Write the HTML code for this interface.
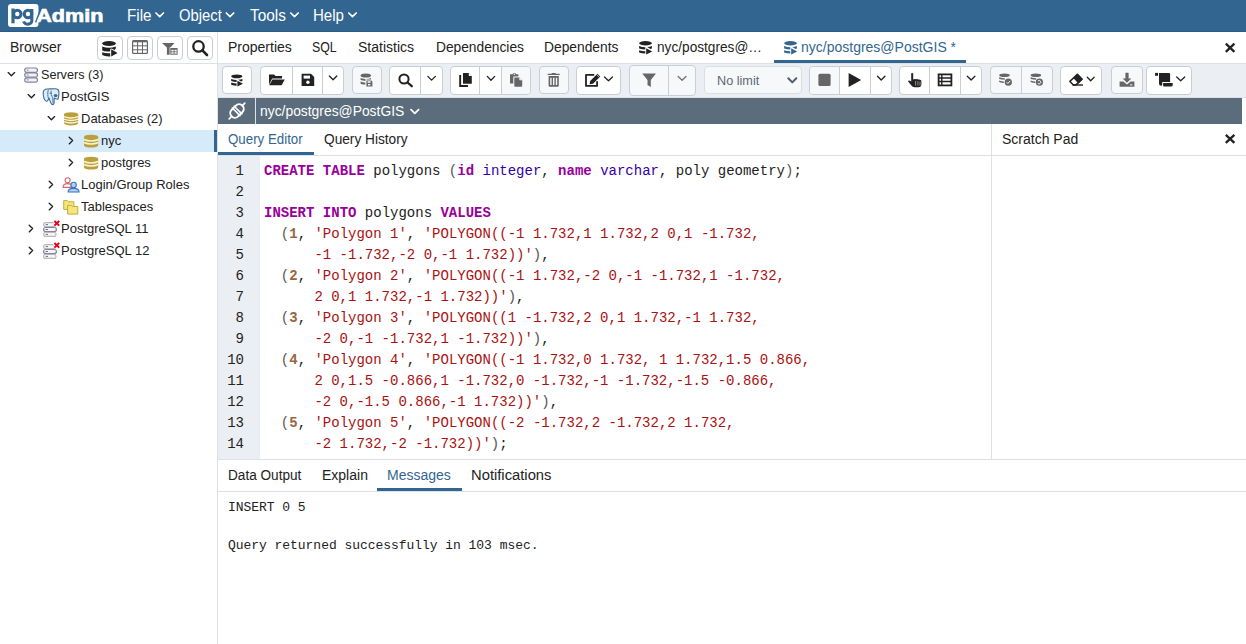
<!DOCTYPE html>
<html><head><meta charset="utf-8">
<style>
*{box-sizing:border-box;margin:0;padding:0}
html,body{width:1246px;height:644px;overflow:hidden;background:#fff;font-family:"Liberation Sans",sans-serif;color:#222}
.a{position:absolute}
.t{position:absolute;white-space:nowrap;line-height:1}
.m{font-family:"Liberation Mono",monospace}
svg{position:absolute;display:block}
/* header */
#hdr{left:0;top:0;width:1246px;height:32px;background:#326690;border-bottom:1px solid #2b5b84}
.menu{color:#fff;font-size:16px;transform-origin:0 0}
/* left */
#vdiv{left:217px;top:32px;width:1px;height:612px;background:#dde0e6}
.bbtn{position:absolute;top:36px;width:26px;height:24px;border:1px solid #c9ced6;border-radius:4px;background:#fff}
.tree{font-size:13px}
/* right */
.tab{font-size:14px}
.hl{background:#dde0e6}
#tb{left:218px;top:64px;width:1028px;height:34px;background:#ebeef3;border-bottom:1px solid #dde0e6}
.btn{position:absolute;top:66px;height:28px;border:1px solid #c9ced6;border-radius:4px;background:#fff}
.dis{background:#f7f8fa}
.sep{position:absolute;top:0;bottom:0;width:1px;background:#c9ced6}
#conn{left:218px;top:98px;width:1024px;height:26px;background:#5b6d7c}
.code{font-size:14px;line-height:21px}
.kw{color:#990099;font-weight:bold}
.st{color:#aa1111}
.nu{color:#996644;font-weight:bold}
.bi{color:#3300aa}
.br{color:#555}
</style></head><body>

<!-- HEADER -->
<div id="hdr" class="a"></div>
<div class="t menu" style="left:127.3px;top:7.5px;transform:scaleX(0.95)">File</div>
<div class="t menu" style="left:179px;top:7.5px;transform:scaleX(0.925)">Object</div>
<div class="t menu" style="left:250px;top:7.5px;transform:scaleX(0.96)">Tools</div>
<div class="t menu" style="left:313px;top:7.5px;transform:scaleX(0.94)">Help</div>

<!-- LEFT PANEL -->
<div id="vdiv" class="a"></div>
<div class="t" style="left:10px;top:40px;font-size:14px">Browser</div>
<div class="bbtn" style="left:97px"></div>
<div class="bbtn" style="left:127px"></div>
<div class="bbtn" style="left:157px"></div>
<div class="bbtn" style="left:187px"></div>
<div class="a hl" style="left:0;top:63px;width:217px;height:1px"></div>

<!-- tree -->
<div class="a" style="left:0;top:130px;width:217px;height:22px;background:#d6ebf9"></div>
<div class="a" style="left:214px;top:130px;width:3px;height:22px;background:#326690"></div>
<div class="t tree" style="left:41px;top:68px;transform:scaleX(0.97);transform-origin:0 0">Servers (3)</div>
<div class="t tree" style="left:61px;top:90px">PostGIS</div>
<div class="t tree" style="left:81px;top:112px">Databases (2)</div>
<div class="t tree" style="left:101px;top:134px">nyc</div>
<div class="t tree" style="left:101px;top:156px">postgres</div>
<div class="t tree" style="left:81px;top:178px">Login/Group Roles</div>
<div class="t tree" style="left:81px;top:200px">Tablespaces</div>
<div class="t tree" style="left:61px;top:222px">PostgreSQL 11</div>
<div class="t tree" style="left:61px;top:244px">PostgreSQL 12</div>

<!-- RIGHT: tabs -->
<div class="a hl" style="left:218px;top:63px;width:1028px;height:1px"></div>
<div class="t tab" style="left:228px;top:40px">Properties</div>
<div class="t tab" style="transform:scaleX(0.88);transform-origin:0 0;left:312px;top:40px">SQL</div>
<div class="t tab" style="left:358px;top:40px">Statistics</div>
<div class="t tab" style="transform:scaleX(0.982);transform-origin:0 0;left:436px;top:40px">Dependencies</div>
<div class="t tab" style="transform:scaleX(0.985);transform-origin:0 0;left:544px;top:40px">Dependents</div>
<div class="t tab" style="left:657px;top:40px;transform:scaleX(0.975);transform-origin:0 0">nyc/postgres@…</div>
<div class="t tab" style="left:801px;top:40px;color:#326690">nyc/postgres@PostGIS *</div>
<div class="a" style="left:774px;top:60px;width:192px;height:3px;background:#326690"></div>

<!-- toolbar -->
<div id="tb" class="a"></div>
<div class="btn" style="left:222px;width:30px"></div>
<div class="btn" style="height:29px;left:260px;width:84px"><div class="sep" style="left:31px"></div><div class="sep" style="left:61px"></div></div>
<div class="btn dis" style="left:352px;width:30px"></div>
<div class="btn" style="height:29px;left:389px;width:54px"><div class="sep" style="left:30px"></div></div>
<div class="btn" style="height:29px;left:450px;width:81px"><div class="a" style="left:50px;top:0;right:0;bottom:0;background:#f7f8fa;border-radius:0 3px 3px 0"></div><div class="sep" style="left:28px"></div><div class="sep" style="left:50px"></div></div>
<div class="btn dis" style="left:539px;width:30px"></div>
<div class="btn" style="height:29px;left:576px;width:45px"></div>
<div class="btn dis" style="left:629px;width:67px;top:65px;height:31px"><div class="sep" style="left:38px"></div></div>
<div class="btn dis" style="left:704px;width:98px;border-color:#dadde3"></div>
<div class="btn" style="height:29px;left:809px;width:83px"><div class="a" style="left:0;top:0;width:29px;bottom:0;background:#f7f8fa;border-radius:3px 0 0 3px"></div><div class="sep" style="left:29px"></div><div class="sep" style="left:60px"></div></div>
<div class="btn" style="height:29px;left:899px;width:83px"><div class="sep" style="left:29px"></div><div class="sep" style="left:60px"></div></div>
<div class="btn dis" style="left:990px;width:63px"><div class="sep" style="left:30px"></div></div>
<div class="btn" style="height:29px;left:1060px;width:42px"></div>
<div class="btn dis" style="left:1111px;width:32px"></div>
<div class="btn" style="height:29px;left:1146px;width:46px"></div>
<div class="t" style="left:716.5px;top:74px;font-size:13px;color:#5b6877;transform:scaleX(0.975);transform-origin:0 0">No limit</div>

<!-- connection bar -->
<div id="conn" class="a"><div class="a" style="left:37px;top:0;width:1px;height:26px;background:#dfe3e8"></div></div>
<div class="t" style="left:259.6px;top:104px;font-size:14px;color:#fff;transform:scaleX(0.99);transform-origin:0 0">nyc/postgres@PostGIS</div>

<!-- query editor tabs -->
<div class="t tab" style="transform:scaleX(0.95);transform-origin:0 0;left:228px;top:132px;color:#326690">Query Editor</div>
<div class="t tab" style="transform:scaleX(0.977);transform-origin:0 0;left:324px;top:132px">Query History</div>
<div class="a" style="left:218px;top:152px;width:96px;height:3px;background:#326690"></div>
<div class="a hl" style="left:218px;top:155px;width:1028px;height:1px"></div>
<div class="a hl" style="left:991px;top:124px;width:1px;height:335px"></div>
<div class="t tab" style="left:1002px;top:132px">Scratch Pad</div>

<!-- editor -->
<div class="a" style="left:218px;top:156px;width:42px;height:303px;background:#ebeef3"></div>
<pre class="a m code" style="left:218px;top:161px;width:26px;text-align:right;color:#222">1
2
3
4
5
6
7
8
9
10
11
12
13
14</pre>
<pre class="a m code" style="left:264px;top:161px;color:#222"><span class="kw">CREATE</span> <span class="kw">TABLE</span> polygons <span class="br">(</span><span class="kw">id</span> <span class="bi">integer</span>, <span class="kw">name</span> <span class="bi">varchar</span>, poly geometry<span class="br">)</span>;

<span class="kw">INSERT</span> <span class="kw">INTO</span> polygons <span class="kw">VALUES</span>
  <span class="br">(</span><span class="nu">1</span>, <span class="st">'Polygon 1'</span>, <span class="st">'POLYGON((-1 1.732,1 1.732,2 0,1 -1.732,</span>
<span class="st">      -1 -1.732,-2 0,-1 1.732))'</span><span class="br">)</span>,
  <span class="br">(</span><span class="nu">2</span>, <span class="st">'Polygon 2'</span>, <span class="st">'POLYGON((-1 1.732,-2 0,-1 -1.732,1 -1.732,</span>
<span class="st">      2 0,1 1.732,-1 1.732))'</span><span class="br">)</span>,
  <span class="br">(</span><span class="nu">3</span>, <span class="st">'Polygon 3'</span>, <span class="st">'POLYGON((1 -1.732,2 0,1 1.732,-1 1.732,</span>
<span class="st">      -2 0,-1 -1.732,1 -1.732))'</span><span class="br">)</span>,
  <span class="br">(</span><span class="nu">4</span>, <span class="st">'Polygon 4'</span>, <span class="st">'POLYGON((-1 1.732,0 1.732, 1 1.732,1.5 0.866,</span>
<span class="st">      2 0,1.5 -0.866,1 -1.732,0 -1.732,-1 -1.732,-1.5 -0.866,</span>
<span class="st">      -2 0,-1.5 0.866,-1 1.732))'</span><span class="br">)</span>,
  <span class="br">(</span><span class="nu">5</span>, <span class="st">'Polygon 5'</span>, <span class="st">'POLYGON((-2 -1.732,2 -1.732,2 1.732,</span>
<span class="st">      -2 1.732,-2 -1.732))'</span><span class="br">)</span>;</pre>
<div class="a hl" style="left:218px;top:459px;width:1028px;height:1px"></div>

<!-- output tabs -->
<div class="t tab" style="transform:scaleX(0.972);transform-origin:0 0;left:228px;top:468px">Data Output</div>
<div class="t tab" style="left:322px;top:468px">Explain</div>
<div class="t tab" style="left:387px;top:468px;color:#326690">Messages</div>
<div class="t tab" style="transform:scaleX(1.055);transform-origin:0 0;left:471px;top:468px">Notifications</div>
<div class="a" style="left:377px;top:488px;width:85px;height:3px;background:#326690"></div>
<div class="a hl" style="left:218px;top:491px;width:1028px;height:1px"></div>
<pre class="a m" style="left:228px;top:498px;font-size:13px;line-height:19px;letter-spacing:-0.04px;color:#222">INSERT 0 5

Query returned successfully in 103 msec.</pre>


<svg class="a" style="left:0;top:0" width="1246" height="644" viewBox="0 0 1246 644">
<!-- logo -->
<rect x="8" y="4" width="30.5" height="23" rx="3" fill="#fff"/>
<g fill="none" stroke="#326690" stroke-width="3.1">
 <circle cx="17.3" cy="14" r="3.75"/>
 <circle cx="28" cy="14" r="3.75"/>
 <path d="M31.8,9 V19.6 A4.2,3.6 0 0 1 23.6,21.4"/>
</g>
<rect x="11.4" y="8.5" width="3.2" height="14.8" fill="#326690"/>
<text x="36.3" y="21.6" font-family="Liberation Sans" font-weight="bold" font-size="18.4" fill="#fff" stroke="#fff" stroke-width="0.7" textLength="67" lengthAdjust="spacingAndGlyphs">Admin</text>
<path d="M41.2,7.6 L35.6,22.6" stroke="#326690" stroke-width="1.3"/>
<!-- menu chevrons -->
<g fill="none" stroke="#fff" stroke-width="1.7" stroke-linecap="round" stroke-linejoin="round">
<polyline points="156,13 159.7,16.6 163.4,13"/>
<polyline points="226.3,13 230,16.6 233.7,13"/>
<polyline points="290.8,13 294.5,16.6 298.2,13"/>
<polyline points="348.8,13 352.5,16.6 356.2,13"/>
</g>
<!-- browser buttons -->
<g fill="#222">
 <ellipse cx="109" cy="43.5" rx="6.8" ry="2.5"/>
 <path d="M102.2,46.4 Q109,49.2 115.8,46.4 V48.6 L114.6,49.9 L111.4,48.4 L110.2,48.9 V51.4 Q105,52 102.2,50.6Z"/>
 <path d="M102.2,52.2 Q106,53.6 110.2,53.2 V56.4 Q104.6,56.6 102.2,55.1Z"/>
 <path d="M111.2,49.3 L117.6,52.9 L111.2,56.6Z"/>
</g>
<rect x="132" y="40" width="16" height="14" rx="1.5" fill="#666"/>
<g fill="#fff">
 <rect x="133.2" y="42.3" width="3.9" height="3"/><rect x="138.1" y="42.3" width="3.9" height="3"/><rect x="143" y="42.3" width="3.8" height="3"/>
 <rect x="133.2" y="46.3" width="3.9" height="3"/><rect x="138.1" y="46.3" width="3.9" height="3"/><rect x="143" y="46.3" width="3.8" height="3"/>
 <rect x="133.2" y="50.3" width="3.9" height="2.5"/><rect x="138.1" y="50.3" width="3.9" height="2.5"/><rect x="143" y="50.3" width="3.8" height="2.5"/>
</g>
<path d="M162,43 H174.5 L170.3,47.6 V54.7 H166.9 V47.6 Z" fill="#666"/>
<rect x="169.6" y="47.4" width="8.6" height="7.9" fill="#fff"/>
<rect x="170.3" y="48" width="7.3" height="6.7" fill="#666"/>
<g fill="#fff"><rect x="171.4" y="49.8" width="2.2" height="1.6"/><rect x="174.5" y="49.8" width="2.2" height="1.6"/><rect x="171.4" y="52.2" width="2.2" height="1.5"/><rect x="174.5" y="52.2" width="2.2" height="1.5"/></g>
<circle cx="198.5" cy="46.4" r="5.2" fill="none" stroke="#222" stroke-width="2.3"/>
<line x1="202.4" y1="50.4" x2="207" y2="55" stroke="#222" stroke-width="2.6" stroke-linecap="round"/>

<!-- tree chevrons -->
<g fill="none" stroke="#222" stroke-width="1.35" stroke-linecap="round" stroke-linejoin="round">
<polyline points="8.2,72.6 11.4,75.8 14.6,72.6"/>
<polyline points="28.2,94.6 31.4,97.8 34.6,94.6"/>
<polyline points="48.2,116.6 51.4,119.8 54.6,116.6"/>
<polyline points="69.2,137.3 72.6,140.6 69.2,143.9"/>
<polyline points="69.2,159.3 72.6,162.6 69.2,165.9"/>
<polyline points="49.2,181.3 52.6,184.6 49.2,187.9"/>
<polyline points="49.2,203.3 52.6,206.6 49.2,209.9"/>
<polyline points="29.2,225.3 32.6,228.6 29.2,231.9"/>
<polyline points="29.2,247.3 32.6,250.6 29.2,253.9"/>
</g>
<!-- servers icon -->
<g fill="#f2f2f6" stroke="#84849e" stroke-width="1.2">
<rect x="24.7" y="68" width="12.8" height="4.3" rx="2.15"/>
<rect x="24.7" y="72.9" width="12.8" height="4.3" rx="2.15"/>
<rect x="24.7" y="77.8" width="12.8" height="4.3" rx="2.15"/>
</g>
<g stroke="#84849e" stroke-width="1"><path d="M26.8,70.1 H28.6 M26.8,75 H28.6 M26.8,79.9 H28.6"/></g>
<!-- elephant -->
<path d="M45.2,89.4 C43.6,89.9 42.9,92 43.3,95 C43.7,98 44.9,100.8 46.5,101.2 C47.4,101.4 47.9,100.6 48.2,99.6 L49.2,98.4 C49.7,100.4 50.6,103 51.6,104 C52.6,104.9 53.9,104.5 54.1,103 C54.3,101 53.9,99.2 54.3,98.2 C55.6,98.7 57.4,99.6 58.1,99.1 C58.7,97 59.1,94 58.9,91.6 C58.6,89.6 57.1,88.8 55.1,88.8 C52.1,88.8 49.1,89 47.1,89 C46.1,89 45.7,89.2 45.2,89.4Z" fill="#dcedf9" stroke="#3b6c98" stroke-width="1.1"/>
<path d="M48.3,89.8 C47.5,92.5 47.6,96 48.6,99 M51.2,90.6 C50.6,93 51.4,96 52.6,97.5 C53,99.5 52.8,101.5 53,103.4 M49.6,93.2 H52" fill="none" stroke="#3b6c98" stroke-width="0.9"/>
<ellipse cx="55.6" cy="95.6" rx="1.9" ry="1.7" fill="#3b6c98"/>
<!-- db icons -->
<g>
 <path d="M64,114.3 A7.1,2.1 0 0 1 78.2,114.3 V123.3 A7.1,2.1 0 0 1 64,123.3Z" fill="#b9a03d"/>
 <g fill="none" stroke="#faf5d4" stroke-width="1.3">
 <path d="M64,116.6 Q71.1,119.4 78.2,116.6"/><path d="M64,119.1 Q71.1,121.9 78.2,119.1"/><path d="M64,121.6 Q71.1,124.4 78.2,121.6"/>
 </g>
</g>
<g>
 <path d="M84,136.8 A7.1,2.1 0 0 1 98.2,136.8 V145.4 A7.1,2.1 0 0 1 84,145.4Z" fill="#b9a03d"/>
 <g fill="none" stroke="#faf5d4" stroke-width="1.6">
 <path d="M84,139.6 Q91.1,142.5 98.2,139.6"/><path d="M84,142.6 Q91.1,145.5 98.2,142.6"/>
 </g>
</g>
<g>
 <path d="M84,158.8 A7.1,2.1 0 0 1 98.2,158.8 V167.4 A7.1,2.1 0 0 1 84,167.4Z" fill="#b9a03d"/>
 <g fill="none" stroke="#faf5d4" stroke-width="1.6">
 <path d="M84,161.6 Q91.1,164.5 98.2,161.6"/><path d="M84,164.6 Q91.1,167.5 98.2,164.6"/>
 </g>
</g>
<!-- roles -->
<g fill="#fff" stroke="#d46464" stroke-width="1.1">
 <circle cx="67.6" cy="180.3" r="2.5"/>
 <path d="M63.1,187.4 Q63.1,183.6 67.6,183.6 Q72.1,183.6 72.1,187.4Z"/>
</g>
<g fill="#b3d0f0" stroke="#3b73c4" stroke-width="1.1">
 <circle cx="73.6" cy="185" r="2.7"/>
 <path d="M68.1,192 Q68.1,188.4 73.6,188.4 Q79.1,188.4 79.1,192Z"/>
</g>
<!-- tablespaces -->
<g fill="#f3e67c" stroke="#c6ae3a" stroke-width="1">
 <path d="M63.7,200.6 h3.6 l1,1.2 h5.6 v7.6 h-10.2z"/>
 <path d="M67.6,205.3 h3.6 l1,1.2 h5.6 v7.6 h-10.2z"/>
</g>
<!-- pg servers with x -->
<g transform="translate(0,0)">
<g fill="#f6f6f6" stroke="#b9b9bd" stroke-width="1.1">
<rect x="43.6" y="222.6" width="12.4" height="4" rx="2"/>
<rect x="43.6" y="232.4" width="12.4" height="4" rx="2"/>
</g>
<rect x="43.6" y="227.5" width="12.8" height="4" rx="2" fill="#f6f6f6" stroke="#8585a6" stroke-width="1.2"/>
<path d="M45.6,224.6 H48 M45.6,229.5 H48 M45.6,234.4 H48" stroke="#707080" stroke-width="1"/>
<path d="M54.4,221 L59.2,225.6 M59.2,221 L54.4,225.6" stroke="#fff" stroke-width="3.4"/>
<path d="M54.4,221 L59.2,225.6 M59.2,221 L54.4,225.6" stroke="#e2001a" stroke-width="2"/>
</g>
<g transform="translate(0,22)">
<g fill="#f6f6f6" stroke="#b9b9bd" stroke-width="1.1">
<rect x="43.6" y="222.6" width="12.4" height="4" rx="2"/>
<rect x="43.6" y="232.4" width="12.4" height="4" rx="2"/>
</g>
<rect x="43.6" y="227.5" width="12.8" height="4" rx="2" fill="#f6f6f6" stroke="#8585a6" stroke-width="1.2"/>
<path d="M45.6,224.6 H48 M45.6,229.5 H48 M45.6,234.4 H48" stroke="#707080" stroke-width="1"/>
<path d="M54.4,221 L59.2,225.6 M59.2,221 L54.4,225.6" stroke="#fff" stroke-width="3.4"/>
<path d="M54.4,221 L59.2,225.6 M59.2,221 L54.4,225.6" stroke="#e2001a" stroke-width="2"/>
</g>
<!-- tab icons -->
<g fill="#222">
 <ellipse cx="645.5" cy="43.3" rx="6.4" ry="2.2"/>
 <path d="M639.1,46 Q642,47.2 645.3,47.2 V49.6 Q642,49.6 639.1,48.6Z M647.2,47 Q650,46.8 651.9,46 V48.4 L650.5,49 Z"/>
 <path d="M639.1,50.2 Q642,51.2 645.3,51.2 V53.6 Q642,53.6 639.1,52.6Z"/>
 <path d="M646.2,48.2 L652.2,51.4 L646.2,54.6Z"/>
</g>
<g fill="#326690" transform="translate(145,0)">
 <ellipse cx="645.5" cy="43.3" rx="6.4" ry="2.2"/>
 <path d="M639.1,46 Q642,47.2 645.3,47.2 V49.6 Q642,49.6 639.1,48.6Z M647.2,47 Q650,46.8 651.9,46 V48.4 L650.5,49 Z"/>
 <path d="M639.1,50.2 Q642,51.2 645.3,51.2 V53.6 Q642,53.6 639.1,52.6Z"/>
 <path d="M646.2,48.2 L652.2,51.4 L646.2,54.6Z"/>
</g>
<path d="M1225.8,43.6 L1234.4,51.8 M1234.4,43.6 L1225.8,51.8" stroke="#222" stroke-width="2.3"/>
<path d="M1225.8,134.8 L1234.4,142.8 M1234.4,134.8 L1225.8,142.8" stroke="#222" stroke-width="2.3"/>

<!-- toolbar icons -->
<g fill="#222">
 <ellipse cx="236.8" cy="76.3" rx="5.6" ry="1.9"/>
 <path d="M231.2,78.9 Q234,80 236.6,80 V82 Q234,82 231.2,81.1Z M238.2,79.8 Q240.5,79.5 242.4,78.9 V80.9 L241,81.5Z"/>
 <path d="M231.2,82.6 Q234,83.6 236.6,83.6 V85.8 Q234,85.8 231.2,84.8Z"/>
 <path d="M237.4,80.8 L243,83.7 L237.4,86.6Z"/>
</g>
<g fill="#222">
 <path d="M269,74.4 H274 L275.6,76 H282 V78.4 H272.2 L269,84.6Z"/>
 <path d="M272.4,79.4 H284.8 L281.6,85.2 H269.2Z"/>
</g>
<g>
 <path d="M301.6,73.8 H311 L314.2,77 V86 H301.6Z" fill="#222"/>
 <rect x="303.6" y="75.6" width="6.4" height="3" fill="#fff"/>
 <circle cx="307.9" cy="82.3" r="1.7" fill="#fff"/>
</g>
<g fill="none" stroke="#222" stroke-width="1.3" stroke-linecap="round" stroke-linejoin="round">
 <polyline points="329.4,76 333.1,79.8 336.8,76"/>
 <polyline points="427.8,76.4 431.6,80.1 435.4,76.4"/>
 <polyline points="487.3,76.4 491,80.2 494.7,76.4"/>
 <polyline points="604.5,77 608.5,80.7 612.5,77"/>
 <polyline points="877.5,76.2 881.2,80 884.9,76.2"/>
 <polyline points="967.3,76.2 971.1,80 974.9,76.2"/>
 <polyline points="1087.3,77.3 1090.7,80.8 1094.1,77.3"/>
 <polyline points="1176.7,77 1180.7,80.7 1184.7,77"/>
</g>
<polyline points="678.2,76.4 682.1,80.2 686,76.4" fill="none" stroke="#777" stroke-width="1.4" stroke-linecap="round" stroke-linejoin="round"/>
<polyline points="788.3,78.2 792.3,82.4 796.3,78.2" fill="none" stroke="#4f5e6e" stroke-width="2" stroke-linecap="round" stroke-linejoin="round"/>
<!-- disabled db save -->
<g fill="#666">
 <ellipse cx="365.8" cy="75.5" rx="5.2" ry="2"/>
 <path d="M360.6,77.9 Q363,78.9 365.4,79 V80.9 Q363,80.8 360.6,80Z M366.6,79 Q369,78.8 371,77.9 V79.5 H366.6Z"/>
 <path d="M360.6,81.6 Q363,82.6 365.4,82.7 V84.6 Q363,84.5 360.6,83.7Z"/>
 <path d="M366.4,80.4 H371.2 L372.4,81.6 V86.4 H366.4Z"/>
</g>
<rect x="367.6" y="81.2" width="3" height="1.6" fill="#f7f8fa"/>
<rect x="368" y="84" width="2.4" height="1.4" fill="#f7f8fa"/>
<!-- search -->
<circle cx="404" cy="79" r="4.6" fill="none" stroke="#222" stroke-width="2"/>
<line x1="407.5" y1="82.5" x2="411.8" y2="86.2" stroke="#222" stroke-width="2.3" stroke-linecap="round"/>
<!-- copy -->
<path d="M463,73 H468.6 L471.8,76.2 V83.8 H463Z" fill="#222"/>
<path d="M468.8,73 L471.8,76 H468.8Z" fill="#fff"/>
<path d="M459.2,75.1 H461.1 V85 H468 V86.9 H459.2Z" fill="#222"/>
<!-- paste gray -->
<path d="M510,74.2 H512.6 Q513.2,72.9 514.4,72.9 Q515.6,72.9 516.2,74.2 H518.4 V76.4 H513.4 V83.6 H510Z" fill="#666"/>
<circle cx="514.4" cy="74.3" r="0.7" fill="#f7f8fa"/>
<path d="M514.3,77.4 H519.6 L522.2,80 V86 Q522.2,86.8 521.4,86.8 H515.1 Q514.3,86.8 514.3,86Z" fill="#666" stroke="#f7f8fa" stroke-width="1" paint-order="stroke"/>
<path d="M519.7,77.6 V80 H522" fill="#f7f8fa" stroke="#f7f8fa" stroke-width="0.6"/>
<!-- trash gray -->
<g fill="#666">
 <rect x="547.6" y="73.8" width="12.2" height="1.3" rx="0.6"/>
 <rect x="551.6" y="72.9" width="4.2" height="1.4" rx="0.6"/>
 <path d="M548.6,76 H558.8 V85.6 Q558.8,86.8 557.6,86.8 H549.8 Q548.6,86.8 548.6,85.6Z"/>
</g>
<g fill="#f7f8fa"><rect x="550.2" y="77.8" width="1.4" height="7.2"/><rect x="553" y="77.8" width="1.4" height="7.2"/><rect x="555.8" y="77.8" width="1.4" height="7.2"/></g>
<!-- edit -->
<path d="M594.2,74.9 H586 V85.9 H597.1 V81.2" fill="none" stroke="#222" stroke-width="1.8" stroke-linejoin="round"/>
<path d="M589.6,84.2 L590.2,80.9 L597.4,73.7 L600.3,76.6 L593,83.8Z" fill="#222"/>
<path d="M596.6,74.5 L599.5,77.4" stroke="#fff" stroke-width="0.7"/>
<!-- filter gray -->
<path d="M642.2,73.4 H656 L650.8,80 V87 L647.5,85 V80Z" fill="#666"/>
<!-- stop -->
<rect x="818.4" y="73.7" width="12.2" height="12.3" rx="1.6" fill="#666"/>
<!-- play -->
<path d="M848.6,73 L861.2,80 L848.6,87Z" fill="#222"/>
<!-- hand -->
<path d="M911.2,73.2 Q912.4,72.6 913.2,73.4 V79.5 Q914.5,78.6 916,79.3 Q917.3,78.8 918.4,79.6 Q919.6,79.2 920.6,80 Q921.4,80.4 921.4,81.4 V84.2 Q921.4,87.2 918.4,87.2 H914.4 Q912.6,87.2 911.4,85.6 L908.3,81.8 Q907.8,80.7 908.9,80.4 Q909.9,80.3 911.2,81.4Z" fill="#222"/>
<g stroke="#fff" stroke-width="0.5"><path d="M915.6,81 V85.6 M917.9,81.2 V85.6 M920,81.6 V85.6"/></g>
<!-- list -->
<rect x="938.6" y="74.4" width="12.8" height="11" fill="none" stroke="#222" stroke-width="1.8"/>
<path d="M938.6,78.1 H951.4 M938.6,81.6 H951.4" stroke="#222" stroke-width="1.5"/>
<path d="M941.8,75 V85" stroke="#222" stroke-width="1.4"/>
<!-- commit gray -->
<g fill="#666">
 <ellipse cx="1004.5" cy="75.2" rx="5.3" ry="1.8"/>
 <path d="M999.2,77.3 Q1002,78.2 1004.8,78.3 V79.8 Q1002,79.8 999.2,79Z"/>
 <path d="M999.2,80.4 Q1001.5,81.3 1003.8,81.4 V83 Q1001.5,82.9 999.2,82.1Z"/>
 <circle cx="1008.3" cy="82.2" r="3.6"/>
</g>
<path d="M1006.6,82.2 L1007.9,83.5 L1010.2,80.9" fill="none" stroke="#f7f8fa" stroke-width="1"/>
<g fill="#666">
 <ellipse cx="1035.9" cy="75.2" rx="5.3" ry="1.8"/>
 <path d="M1030.6,77.3 Q1033.4,78.2 1036.2,78.3 V79.8 Q1033.4,79.8 1030.6,79Z"/>
 <path d="M1030.6,80.4 Q1032.9,81.3 1035.2,81.4 V83 Q1032.9,82.9 1030.6,82.1Z"/>
 <circle cx="1039.4" cy="82.2" r="3.6"/>
</g>
<path d="M1038,80.9 A1.7,1.7 0 1 1 1037.8,83.3" fill="none" stroke="#f7f8fa" stroke-width="1"/>
<!-- eraser -->
<path d="M1069.9,81.4 L1077.4,74.3 L1082.1,79.2 L1075.6,85.1 H1073.4Z" fill="none" stroke="#222" stroke-width="1.5" stroke-linejoin="round"/>
<path d="M1073.2,77.9 L1077.4,73.7 L1082.8,79.2 L1078.5,83.5Z" fill="#222"/>
<rect x="1072.6" y="84.3" width="10.4" height="1.4" fill="#222"/>
<!-- download gray -->
<g fill="#666">
 <path d="M1125.4,72.8 H1128.6 V78.4 H1131.4 L1127,82.8 L1122.6,78.4 H1125.4Z"/>
 <path d="M1119.6,81.6 H1123.4 L1127,84.6 L1130.6,81.6 H1134.4 V86.8 H1119.6Z"/>
</g>
<rect x="1130" y="84.4" width="2.4" height="1" fill="#f7f8fa"/>
<!-- macro scroll -->
<rect x="1155.1" y="72.9" width="2.9" height="2.9" fill="#222"/>
<path d="M1159,72.9 H1169 Q1170.1,72.9 1170.1,74 V82 H1162.2 V84.6 Q1162.2,85.8 1161.1,85.8 Q1159,85.8 1159,83.6Z" fill="#222"/>
<path d="M1163.1,83.1 H1172.7 V84.9 Q1172.7,86.6 1171,86.6 H1163.9 Q1163.1,86.6 1163.1,85.6Z" fill="#222"/>
<!-- connection plug -->
<g transform="rotate(-45 237 111)" fill="none" stroke="#fff" stroke-linecap="round">
 <rect x="229.4" y="106.4" width="15.2" height="9.2" rx="4.6" stroke-width="2"/>
 <line x1="235.8" y1="105.6" x2="235.8" y2="116.4" stroke-width="1.6"/>
 <line x1="238.4" y1="105.6" x2="238.4" y2="116.4" stroke-width="1.6"/>
 <line x1="226" y1="111" x2="229.4" y2="111" stroke-width="1.8"/>
 <line x1="244.6" y1="111" x2="248" y2="111" stroke-width="1.8"/>
</g>
<polyline points="411,109.6 414.8,113.4 418.6,109.6" fill="none" stroke="#fff" stroke-width="1.8" stroke-linecap="round" stroke-linejoin="round"/>
</svg>
</body></html>
